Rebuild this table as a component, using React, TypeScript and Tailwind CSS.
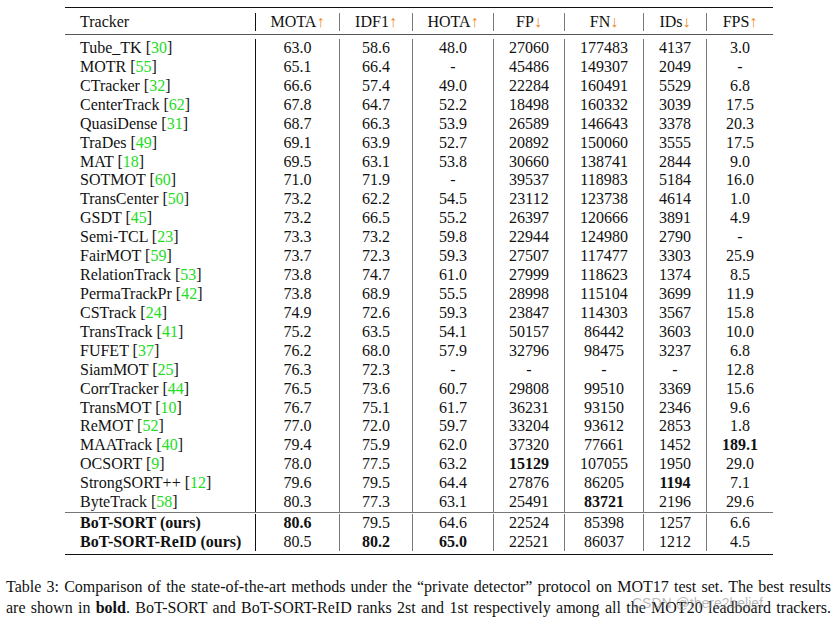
const rows: [string, string, string[]][] = [
  ['Tube_TK', '30', ['63.0', '58.6', '48.0', '27060', '177483', '4137', '3.0']],
  ['MOTR', '55', ['65.1', '66.4', '-', '45486', '149307', '2049', '-']],
  ['CTracker', '32', ['66.6', '57.4', '49.0', '22284', '160491', '5529', '6.8']],
  ['CenterTrack', '62', ['67.8', '64.7', '52.2', '18498', '160332', '3039', '17.5']],
  ['QuasiDense', '31', ['68.7', '66.3', '53.9', '26589', '146643', '3378', '20.3']],
  ['TraDes', '49', ['69.1', '63.9', '52.7', '20892', '150060', '3555', '17.5']],
  ['MAT', '18', ['69.5', '63.1', '53.8', '30660', '138741', '2844', '9.0']],
  ['SOTMOT', '60', ['71.0', '71.9', '-', '39537', '118983', '5184', '16.0']],
  ['TransCenter', '50', ['73.2', '62.2', '54.5', '23112', '123738', '4614', '1.0']],
  ['GSDT', '45', ['73.2', '66.5', '55.2', '26397', '120666', '3891', '4.9']],
  ['Semi-TCL', '23', ['73.3', '73.2', '59.8', '22944', '124980', '2790', '-']],
  ['FairMOT', '59', ['73.7', '72.3', '59.3', '27507', '117477', '3303', '25.9']],
  ['RelationTrack', '53', ['73.8', '74.7', '61.0', '27999', '118623', '1374', '8.5']],
  ['PermaTrackPr', '42', ['73.8', '68.9', '55.5', '28998', '115104', '3699', '11.9']],
  ['CSTrack', '24', ['74.9', '72.6', '59.3', '23847', '114303', '3567', '15.8']],
  ['TransTrack', '41', ['75.2', '63.5', '54.1', '50157', '86442', '3603', '10.0']],
  ['FUFET', '37', ['76.2', '68.0', '57.9', '32796', '98475', '3237', '6.8']],
  ['SiamMOT', '25', ['76.3', '72.3', '-', '-', '-', '-', '12.8']],
  ['CorrTracker', '44', ['76.5', '73.6', '60.7', '29808', '99510', '3369', '15.6']],
  ['TransMOT', '10', ['76.7', '75.1', '61.7', '36231', '93150', '2346', '9.6']],
  ['ReMOT', '52', ['77.0', '72.0', '59.7', '33204', '93612', '2853', '1.8']],
  ['MAATrack', '40', ['79.4', '75.9', '62.0', '37320', '77661', '1452', '189.1']],
  ['OCSORT', '9', ['78.0', '77.5', '63.2', '15129', '107055', '1950', '29.0']],
  ['StrongSORT++', '12', ['79.6', '79.5', '64.4', '27876', '86205', '1194', '7.1']],
  ['ByteTrack', '58', ['80.3', '77.3', '63.1', '25491', '83721', '2196', '29.6']],
];

const ours: [string, string[]][] = [
  ['BoT-SORT (ours)', ['80.6', '79.5', '64.6', '22524', '85398', '1257', '6.6']],
  ['BoT-SORT-ReID (ours)', ['80.5', '80.2', '65.0', '22521', '86037', '1212', '4.5']],
];

// best results, "row:col"
const best = new Set(['21:6', '22:3', '23:5', '24:4', 'o0:0', 'o1:1', 'o1:2']);

const headers: [string, string][] = [
  ['MOTA', '↑'],
  ['IDF1', '↑'],
  ['HOTA', '↑'],
  ['FP', '↓'],
  ['FN', '↓'],
  ['IDs', '↓'],
  ['FPS', '↑'],
];

const grid =
  'grid grid-cols-[190px_84px_73px_81px_71px_79px_63px_67px]';

function NumCell({ value, bold, first }: { value: string; bold: boolean; first: boolean }) {
  return (
    <div
      className={`text-center ${first ? 'border-l border-[#111]' : 'border-l border-[#7a7a7a]'} ${bold ? 'font-bold' : ''}`}
    >
      {value}
    </div>
  );
}

export default function App() {
  return (
    <div className="w-[839px] h-[618px] bg-white text-[#111] font-['Liberation_Serif',serif] overflow-hidden">
      <div className="pt-[7px] ml-[65px] w-[708px] text-[16px]">
        <div className={`${grid} border-t border-[#111] pt-[5px] pb-[3px] leading-[18px]`}>
          <div className="pl-[15px]">Tracker</div>
          {headers.map(([label, arrow], i) => (
            <div
              key={label}
              className={`text-center border-l ${i === 0 ? 'border-[#111]' : 'border-[#7a7a7a]'}`}
            >
              {label}
              <span className="text-[#ee8a1e]">{arrow}</span>
            </div>
          ))}
        </div>

        <div className={`${grid} border-t border-[#555] pt-[4px] leading-[18.92px]`}>
          {rows.map(([name, ref, vals], r) => (
            <div key={name} className="contents">
              <div className="pl-[15px] whitespace-nowrap">
                {name} [<span className="text-[#22dd22]">{ref}</span>]
              </div>
              {vals.map((v, c) => (
                <NumCell key={c} value={v} bold={best.has(`${r}:${c}`)} first={c === 0} />
              ))}
            </div>
          ))}
        </div>

        <div className={`${grid} border-t border-[#777] pt-[1px] pb-[3px] border-b border-b-[#111] leading-[18.5px]`}>
          {ours.map(([name, vals], r) => (
            <div key={name} className="contents">
              <div className="pl-[15px] font-bold whitespace-nowrap">{name}</div>
              {vals.map((v, c) => (
                <NumCell key={c} value={v} bold={best.has(`o${r}:${c}`)} first={c === 0} />
              ))}
            </div>
          ))}
        </div>
      </div>

      <div className="relative mt-[21px] ml-[6px] w-[825px] text-[16px] leading-[21px]">
        <p className="text-justify [text-align-last:justify] whitespace-nowrap">
          Table 3: Comparison of the state-of-the-art methods under the “private detector” protocol on MOT17 test set. The best results
        </p>
        <p className="text-justify [text-align-last:justify] whitespace-nowrap">
          are shown in <b>bold</b>. BoT-SORT and BoT-SORT-ReID ranks 2st and 1st respectively among all the MOT20 leadboard trackers.
        </p>
        {/* watermark sits over the caption, as in the screenshot */}
        <span className="absolute left-[626px] top-[17px] text-[14px] font-['Liberation_Sans',sans-serif] text-[#8c8c8c]/60">
          CSDN @there2belief
        </span>
      </div>
    </div>
  );
}
